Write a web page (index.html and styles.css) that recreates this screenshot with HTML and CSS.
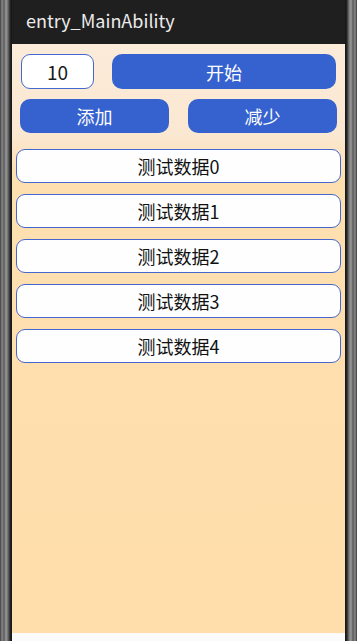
FILE: index.html
```html
<!DOCTYPE html>
<html lang="zh">
<head>
<meta charset="utf-8">
<link rel="stylesheet" href="styles.css">
</head>
<body>
<div class="phone">
  <div class="bezel left"></div>
  <div class="screen">
    <div class="titlebar">entry_MainAbility</div>
    <div class="content">
      <div class="row row1">
        <div class="input">10</div>
        <div class="btn start">开始</div>
      </div>
      <div class="row row2">
        <div class="btn half">添加</div>
        <div class="btn half">减少</div>
      </div>
      <div class="list">
        <div class="item">测试数据0</div>
        <div class="item">测试数据1</div>
        <div class="item">测试数据2</div>
        <div class="item">测试数据3</div>
        <div class="item">测试数据4</div>
      </div>
    </div>
    <div class="bottom"></div>
  </div>
  <div class="bezel right"></div>
</div>
</body>
</html>
```
FILE: styles.css
```css
html, body {
  margin: 0;
  padding: 0;
}
body {
  width: 357px;
  height: 641px;
  overflow: hidden;
  font-family: "Noto Sans CJK SC", "Noto Sans", sans-serif;
}
.phone {
  display: flex;
  height: 641px;
}
.bezel {
  width: 12px;
  flex: none;
}
.bezel.left {
  background: linear-gradient(to right, #3a3a3a 0px, #8a8a8a 2px, #5a5a5a 4px, #9a9a9a 6px, #6a6a6a 8px, #2a2a2a 10px, #111 12px);
}
.bezel.right {
  background: linear-gradient(to right, #111 0px, #2a2a2a 2px, #777 4px, #9a9a9a 6px, #5a5a5a 8px, #8a8a8a 10px, #3a3a3a 12px);
}
.screen {
  width: 333px;
  display: flex;
  flex-direction: column;
}
.titlebar {
  height: 44px;
  flex: none;
  background: #1f1f1f;
  color: #ececec;
  font-size: 18px;
  line-height: 40px;
  padding-left: 14px;
  box-sizing: border-box;
}
.content {
  flex: 1;
  background: linear-gradient(to bottom, #fbebd9 0px, #fbe8d2 90px, #fedfb0 130px, #ffdeab 100%);
  display: flex;
  flex-direction: column;
  padding-top: 10px;
}
.bottom {
  height: 8px;
  flex: none;
  background: #fbfbfb;
}
.row {
  display: flex;
  justify-content: space-between;
}
.row1 {
  padding: 0 9px 0 9px;
  height: 35px;
}
.row2 {
  margin-top: 10px;
  padding: 0 8px;
  height: 34px;
}
.input {
  width: 73px;
  box-sizing: border-box;
  background: #fff;
  border: 1.5px solid #4369d0;
  border-radius: 9px;
  font-size: 19px;
  color: #1a1a1a;
  display: flex;
  align-items: center;
  justify-content: center;
}
.btn {
  background: #3562cf;
  color: #fff;
  border-radius: 10px;
  font-size: 18px;
  display: flex;
  align-items: center;
  justify-content: center;
}
.btn.start {
  width: 224px;
}
.btn.half {
  width: 149px;
}
.list {
  margin-top: 16px;
  padding: 0 4px;
  display: flex;
  flex-direction: column;
  gap: 11px;
}
.item {
  height: 34px;
  box-sizing: border-box;
  background: #fefeff;
  border: 1.5px solid #4468cf;
  border-radius: 9px;
  font-size: 18px;
  color: #111;
  display: flex;
  align-items: center;
  justify-content: center;
}
```
